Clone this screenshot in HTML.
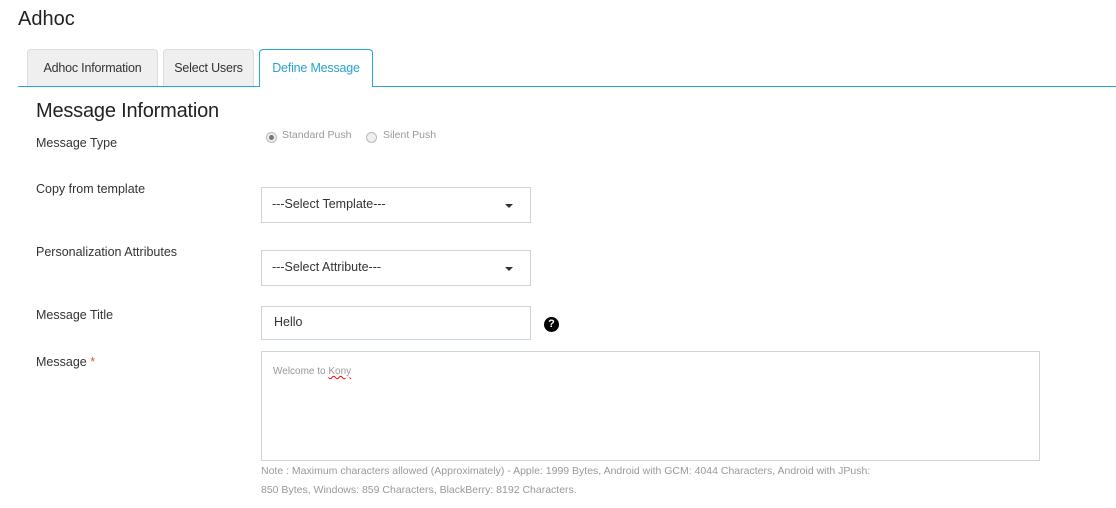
<!DOCTYPE html>
<html><head><style>
body{margin:0;width:1116px;height:508px;background:#fff;font-family:"Liberation Sans",sans-serif;color:#333;position:relative;overflow:hidden}
.a{position:absolute;white-space:nowrap}
.tab{position:absolute;top:49px;height:37px;background:#efefef;border:1px solid #ddd;border-bottom:none;border-radius:4px 4px 0 0;font-size:12.5px;line-height:37px;text-align:center;box-sizing:border-box;color:#333;letter-spacing:-0.2px}
.lbl{font-size:12.5px;color:#333}
.box{position:absolute;border:1px solid #ccd5dd;box-sizing:border-box;background:#fff;font-size:12.5px;color:#333}
.caret{position:absolute;right:17px;top:16px;border-left:4px solid transparent;border-right:4px solid transparent;border-top:4px solid #333}
</style></head><body>
<div class="a" style="left:18px;top:8px;font-size:20px;color:#222">Adhoc</div>
<div class="tab" style="left:27px;width:131px">Adhoc Information</div>
<div class="tab" style="left:163px;width:91px">Select Users</div>
<div class="a" style="left:18px;top:86px;width:1098px;height:1px;background:#29a3cf"></div>
<div class="tab" style="left:259px;width:114px;height:38px;background:#fff;border:1px solid #29a3cf;border-bottom:none;color:#29a3cf">Define Message</div>
<div class="a" style="left:36px;top:100px;font-size:20px;color:#222;letter-spacing:-0.2px">Message Information</div>
<div class="a lbl" style="left:36px;top:136px">Message Type</div>
<div class="a" style="left:266px;top:132px;width:9px;height:9px;border:1px solid #bbb;border-radius:50%;background:#eee"><div style="margin:2px;width:5px;height:5px;border-radius:50%;background:#777"></div></div>
<div class="a" style="left:282px;top:129px;font-size:10.5px;color:#999">Standard Push</div>
<div class="a" style="left:366px;top:132px;width:9px;height:9px;border:1px solid #bbb;border-radius:50%;background:#eee"></div>
<div class="a" style="left:383px;top:129px;font-size:10.5px;color:#999">Silent Push</div>
<div class="a lbl" style="left:36px;top:182px">Copy from template</div>
<div class="box" style="left:261px;top:187px;width:270px;height:36px;padding:9px 10px">---Select Template---<div class="caret"></div></div>
<div class="a lbl" style="left:36px;top:245px">Personalization Attributes</div>
<div class="box" style="left:261px;top:250px;width:270px;height:36px;padding:9px 10px">---Select Attribute---<div class="caret"></div></div>
<div class="a lbl" style="left:36px;top:308px">Message Title</div>
<div class="box" style="left:261px;top:306px;width:270px;height:34px;padding:8px 12px">Hello</div>
<div class="a" style="left:544px;top:317px;width:15px;height:15px;border-radius:50%;background:#000;color:#fff;font-size:11px;font-weight:bold;text-align:center;line-height:15px">?</div>
<div class="a lbl" style="left:36px;top:355px">Message <span style="color:#d9534f">*</span></div>
<div class="box" style="left:261px;top:351px;width:779px;height:110px;padding:14px 11px;font-size:10px;color:#999">Welcome to <span style="text-decoration:underline wavy red">Kony</span></div>
<div class="a" style="left:261px;top:462px;font-size:10.5px;color:#999;line-height:19px">Note : Maximum characters allowed (Approximately) - Apple: 1999 Bytes, Android with GCM: 4044 Characters, Android with JPush:<br>850 Bytes, Windows: 859 Characters, BlackBerry: 8192 Characters.</div>
</body></html>
